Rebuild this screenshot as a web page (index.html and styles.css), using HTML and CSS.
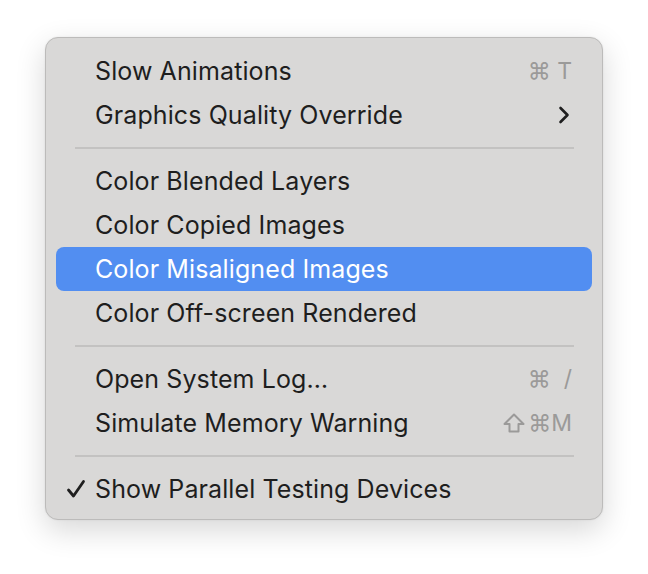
FILE: index.html
```html
<!DOCTYPE html>
<html>
<head>
<meta charset="utf-8">
<link rel="stylesheet" href="styles.css">
</head>
<body>
<div class="stage">
  <div class="menu">
    <div class="item"><span class="label">Slow Animations</span><span class="key">⌘ T</span></div>
    <div class="item"><span class="label">Graphics Quality Override</span>
      <svg class="chev" width="14" height="20" viewBox="0 0 14 20"><path d="M3.5 3 L10.5 10 L3.5 17" fill="none" stroke="#1f1f1f" stroke-width="2.6" stroke-linecap="round" stroke-linejoin="round"/></svg>
    </div>
    <div class="sep"></div>
    <div class="item"><span class="label">Color Blended Layers</span></div>
    <div class="item"><span class="label">Color Copied Images</span></div>
    <div class="item active"><span class="label">Color Misaligned Images</span></div>
    <div class="item"><span class="label">Color Off-screen Rendered</span></div>
    <div class="sep"></div>
    <div class="item"><span class="label">Open System Log…</span><span class="key">⌘ &nbsp;/</span></div>
    <div class="item"><span class="label">Simulate Memory Warning</span><span class="key"><svg class="shift" width="24" height="22" viewBox="0 0 24 22"><path d="M12 2.5 L21.5 12 H16.5 V19.5 H7.5 V12 H2.5 Z" fill="none" stroke="#9b9a99" stroke-width="2" stroke-linejoin="round"/></svg>⌘M</span></div>
    <div class="sep"></div>
    <div class="item checked">
      <svg class="check" width="20" height="20" viewBox="0 0 20 20"><path d="M2.5 11 L7.5 17 L17.5 2.5" fill="none" stroke="#1f1f1f" stroke-width="2.8" stroke-linecap="round" stroke-linejoin="round"/></svg>
      <span class="label">Show Parallel Testing Devices</span>
    </div>
  </div>
</div>
</body>
</html>
```
FILE: styles.css
```css
html, body {
  margin: 0;
  padding: 0;
  background: #ffffff;
}
body {
  width: 648px;
  height: 574px;
  overflow: hidden;
  font-family: "Inter", "Liberation Sans", sans-serif;
}
.stage {
  padding: 37px 0 0 45px;
}
.menu {
  box-sizing: border-box;
  width: 558px;
  height: 483px;
  background: #d9d8d7;
  border: 1px solid #bcbbba;
  border-radius: 13px;
  padding: 11px 0 8px;
  box-shadow: 0 10px 30px rgba(0, 0, 0, 0.16), 0 0 2px rgba(0,0,0,0.08);
}
.item {
  height: 44px;
  margin: 0 10px;
  padding: 0 20px 0 39px;
  display: flex;
  align-items: center;
  justify-content: space-between;
  border-radius: 8px;
  font-size: 25px;
  letter-spacing: 0.1px;
  color: #1e1e1e;
  position: relative;
}
.item.active {
  background: #528ef1;
  color: #ffffff;
}
.key {
  color: #9b9a99;
  font-size: 23px;
  letter-spacing: 0;
  display: flex;
  align-items: center;
}
.shift {
  margin-right: 2px;
}
.chev {
  margin-right: 1px;
}
.check {
  position: absolute;
  left: 10px;
  top: 12px;
}
.sep {
  height: 2px;
  background: #c3c2c1;
  margin: 10px 28px 10px 29px;
}
```
